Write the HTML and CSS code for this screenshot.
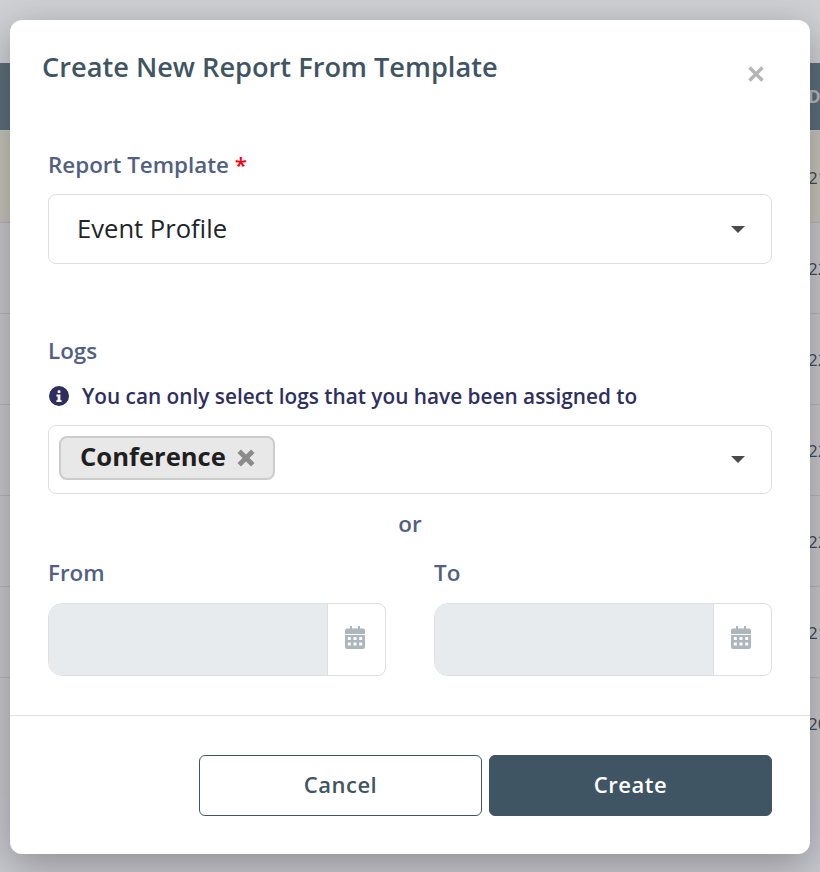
FILE: index.html
```html
<!DOCTYPE html>
<html lang="en">
<head>
<meta charset="utf-8">
<title>Create New Report From Template</title>
<link rel="stylesheet" href="styles.css">
</head>
<body>
<div class="page">
  <div class="table">
    <div class="thead"><span>Date</span></div>
    <div class="row row-hl"><span>21</span></div>
    <div class="row"><span>22</span></div>
    <div class="row"><span>22</span></div>
    <div class="row"><span>22</span></div>
    <div class="row"><span>22</span></div>
    <div class="row"><span>21</span></div>
    <div class="row row-last"><span>20</span></div>
  </div>
</div>
<div class="modal">
  <header class="modal-head">
    <h1 class="title">Create New Report From Template</h1>
    <svg class="close" viewBox="0 0 16 16" width="16" height="16"><path d="M1.500 1.500 14.500 14.500M14.500 1.500 1.500 14.500" stroke="#b5b5b5" stroke-width="3.400" fill="none"/></svg>
  </header>
  <div class="modal-body">
    <div class="label">Report Template <span class="req">*</span></div>
    <div class="select select-single">
      <span class="value">Event Profile</span>
      <span class="caret"></span>
    </div>
    <div class="label label-logs">Logs</div>
    <div class="note">
      <svg class="info" viewBox="0 0 20 20" width="20" height="20"><circle cx="10" cy="10" r="10" fill="#2f2f5f"/><rect x="8.600" y="4.200" width="2.900" height="2.900" rx="1.200" fill="#fff"/><path d="M7.400 8.600h4v5.600h1.200v1.800H7.400v-1.800h1.200v-3.800H7.400z" fill="#fff"/></svg>
      <span>You can only select logs that you have been assigned to</span>
    </div>
    <div class="select select-multi">
      <span class="chip">Conference
        <svg class="chip-x" viewBox="0 0 18 18" width="18" height="18"><path d="M2.200 2.200 15.800 15.800M15.800 2.200 2.200 15.800" stroke="#8a8a8a" stroke-width="4.800" fill="none"/></svg>
      </span>
      <span class="caret"></span>
    </div>
    <div class="or">or</div>
    <div class="dates">
      <div class="date-field">
        <div class="label">From</div>
        <div class="date-input">
          <div class="date-text"></div>
          <div class="date-btn"><svg class="cal" viewBox="0 0 20 23" width="20" height="23"><use href="#cal"/></svg></div>
        </div>
      </div>
      <div class="date-field">
        <div class="label">To</div>
        <div class="date-input">
          <div class="date-text"></div>
          <div class="date-btn"><svg class="cal" viewBox="0 0 20 23" width="20" height="23"><use href="#cal"/></svg></div>
        </div>
      </div>
    </div>
  </div>
  <footer class="modal-foot">
    <button class="btn btn-cancel">Cancel</button>
    <button class="btn btn-create">Create</button>
  </footer>
</div>
<svg class="defs" width="0" height="0"><defs><g id="cal"><path fill="#adb5bd" fill-rule="evenodd" d="M5 0h2v2.500h6V0h2v2.500h3A2 2 0 0 1 20 4.500v3.500H0V4.500a2 2 0 0 1 2-2h3zM0 9h20v12a2 2 0 0 1-2 2H2a2 2 0 0 1-2-2zM2.800 11v3h3v-3zM8.500 11v3h3v-3zM14.200 11v3h3v-3zM2.800 16.500v3h3v-3zM8.500 16.500v3h3v-3zM14.200 16.500v3h3v-3z"/></g></defs></svg>
</body>
</html>
```
FILE: styles.css
```css
* { box-sizing: border-box; }
html, body { margin: 0; height: 100%; overflow: hidden; }
body {
  width: 820px;
  height: 872px;
  position: relative;
  font-family: "Open Sans", sans-serif;
}
.page {
  height: 872px;
  padding-top: 63px;
  background: linear-gradient(#d0d1d5 0, #d0d1d5 794px, #c8c8cf 794px);
}
.table { height: 731px; background: #c8c8cc; }
.thead {
  height: 67px;
  background: #5c6e7b;
  color: #b5bbc0;
  font-size: 17px;
  font-weight: 700;
  line-height: 67px;
  padding-left: 808px;
  white-space: nowrap;
  overflow: hidden;
}
.row {
  height: 91px;
  border-bottom: 1px solid #b4b4b9;
  padding-left: 808px;
  color: #3c4d59;
  font-size: 17px;
  line-height: 92px;
  white-space: nowrap;
  overflow: hidden;
}
.row-hl { height: 93px; line-height: 94px; background: #c6c3ba; border-top: 1px solid #cbcbce; }
.row-last { height: 116px; border-bottom: 0; }
.modal {
  position: absolute;
  left: 10px;
  top: 20px;
  width: 800px;
  height: 834px;
  background: #fff;
  border-radius: 12px;
  box-shadow: 0 10px 40px rgba(0, 0, 0, .3);
  display: flex;
  flex-direction: column;
}
.modal-head {
  display: flex;
  justify-content: space-between;
  padding: 27px 46px 0 32px;
  height: 130px;
}
.title {
  margin: 0;
  color: #3f5563;
  font-size: 27.2px;
  font-weight: 600;
  line-height: 40px;
}
.close { margin-top: 19px; }
.modal-body { padding: 0 38px; flex: 1; }
.label {
  color: #525f81;
  font-size: 22.4px;
  font-weight: 600;
  line-height: 30px;
}
.req { color: #f5000f; }
.select {
  display: flex;
  align-items: center;
  justify-content: space-between;
  border: 1px solid #dedfe1;
  border-radius: 8px;
  background: #fff;
}
.select-single { height: 70px; margin-top: 14px; padding: 0 26px 0 28px; }
.value { color: #212529; font-size: 25.6px; margin-bottom: 2px; }
.caret {
  width: 0;
  height: 0;
  border-left: 7px solid transparent;
  border-right: 7px solid transparent;
  border-top: 7px solid #4a4a4a;
}
.label-logs { margin-top: 72px; }
.note {
  display: flex;
  align-items: center;
  gap: 13px;
  margin-top: 15px;
  padding-left: 1px;
  color: #2f2f5f;
  font-size: 20.8px;
  font-weight: 600;
  line-height: 30px;
}
.select-multi { height: 69px; margin-top: 14px; padding: 0 26px 0 10px; }
.chip {
  display: inline-flex;
  align-items: center;
  gap: 11px;
  height: 44px;
  margin-bottom: 4px;
  padding: 0 18px 2px 19px;
  background: #e8e8e8;
  border: 2px solid #cccccc;
  border-radius: 8px;
  color: #1f1f1f;
  font-size: 25.6px;
  font-weight: 700;
}
.chip-x { margin-top: 2px; }
.or {
  color: #525f81;
  font-size: 22.4px;
  font-weight: 600;
  line-height: 30px;
  text-align: center;
  margin-top: 15px;
}
.dates {
  display: grid;
  grid-template-columns: 338px 338px;
  column-gap: 48px;
  margin-top: 19px;
}
.date-input {
  display: flex;
  height: 73px;
  margin-top: 15px;
  border: 1px solid #dedfe1;
  border-radius: 14px 8px 8px 14px;
  overflow: hidden;
}
.date-text { flex: 1; background: #e8ebee; border-right: 1px solid #dedfe1; }
.date-btn { width: 57px; display: flex; align-items: center; justify-content: center; padding: 0 3px 4px 0; }
.modal-foot {
  display: flex;
  justify-content: flex-end;
  gap: 7px;
  height: 139px;
  padding: 39px 38px 0 0;
  border-top: 1px solid #e2e2e2;
}
.btn {
  width: 283px;
  height: 61px;
  padding-bottom: 5px;
  border-radius: 6px;
  font-family: "Open Sans", sans-serif;
  font-size: 22px;
  font-weight: 600;
  letter-spacing: .5px;
}
.btn-cancel { background: #fff; border: 1px solid #3f5563; color: #3f5563; }
.btn-create { background: #3f5563; border: 1px solid #3f5563; color: #fff; }
.defs { position: absolute; }
```
